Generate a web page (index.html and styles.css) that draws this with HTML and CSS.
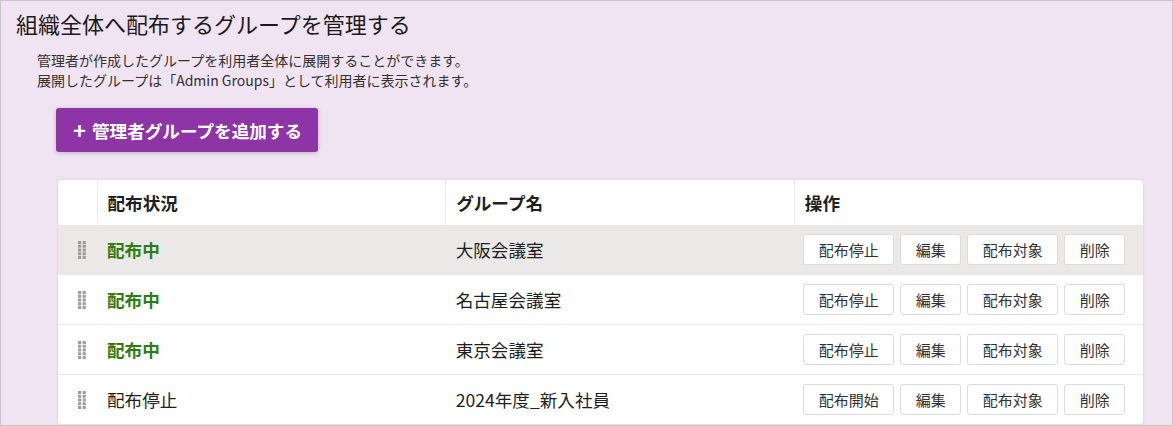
FILE: index.html
```html
<!DOCTYPE html>
<html lang="ja">
<head>
<meta charset="utf-8">
<title>管理者グループ</title>
<link rel="stylesheet" href="styles.css">
</head>
<body>
<div class="page">
  <h1 class="title">組織全体へ配布するグループを管理する</h1>
  <div class="desc">
    <p>管理者が作成したグループを利用者全体に展開することができます。</p>
    <p>展開したグループは「Admin Groups」として利用者に表示されます。</p>
  </div>
  <button class="add-btn"><span class="plus">+</span>管理者グループを追加する</button>
  <div class="card">
    <table class="grid">
      <colgroup>
        <col class="c-drag"><col class="c-col"><col class="c-col"><col class="c-col">
      </colgroup>
      <thead>
        <tr>
          <th class="drag-h"></th>
          <th>配布状況</th>
          <th>グループ名</th>
          <th class="last">操作</th>
        </tr>
      </thead>
      <tbody>
        <tr class="hover">
          <td class="drag"><svg class="handle" width="8" height="18" viewBox="0 0 8 18"><g fill="#9c9c9c"><rect x="0" y="0" width="3.2" height="3"/><rect x="4.6" y="0" width="3.2" height="3"/><rect x="0" y="3.75" width="3.2" height="3"/><rect x="4.6" y="3.75" width="3.2" height="3"/><rect x="0" y="7.5" width="3.2" height="3"/><rect x="4.6" y="7.5" width="3.2" height="3"/><rect x="0" y="11.25" width="3.2" height="3"/><rect x="4.6" y="11.25" width="3.2" height="3"/><rect x="0" y="15" width="3.2" height="3"/><rect x="4.6" y="15" width="3.2" height="3"/></g></svg></td>
          <td class="status on">配布中</td>
          <td>大阪会議室</td>
          <td class="ops"><div class="btns"><button class="b">配布停止</button><button class="b">編集</button><button class="b">配布対象</button><button class="b">削除</button></div></td>
        </tr>
        <tr>
          <td class="drag"><svg class="handle" width="8" height="18" viewBox="0 0 8 18"><g fill="#9c9c9c"><rect x="0" y="0" width="3.2" height="3"/><rect x="4.6" y="0" width="3.2" height="3"/><rect x="0" y="3.75" width="3.2" height="3"/><rect x="4.6" y="3.75" width="3.2" height="3"/><rect x="0" y="7.5" width="3.2" height="3"/><rect x="4.6" y="7.5" width="3.2" height="3"/><rect x="0" y="11.25" width="3.2" height="3"/><rect x="4.6" y="11.25" width="3.2" height="3"/><rect x="0" y="15" width="3.2" height="3"/><rect x="4.6" y="15" width="3.2" height="3"/></g></svg></td>
          <td class="status on">配布中</td>
          <td>名古屋会議室</td>
          <td class="ops"><div class="btns"><button class="b">配布停止</button><button class="b">編集</button><button class="b">配布対象</button><button class="b">削除</button></div></td>
        </tr>
        <tr>
          <td class="drag"><svg class="handle" width="8" height="18" viewBox="0 0 8 18"><g fill="#9c9c9c"><rect x="0" y="0" width="3.2" height="3"/><rect x="4.6" y="0" width="3.2" height="3"/><rect x="0" y="3.75" width="3.2" height="3"/><rect x="4.6" y="3.75" width="3.2" height="3"/><rect x="0" y="7.5" width="3.2" height="3"/><rect x="4.6" y="7.5" width="3.2" height="3"/><rect x="0" y="11.25" width="3.2" height="3"/><rect x="4.6" y="11.25" width="3.2" height="3"/><rect x="0" y="15" width="3.2" height="3"/><rect x="4.6" y="15" width="3.2" height="3"/></g></svg></td>
          <td class="status on">配布中</td>
          <td>東京会議室</td>
          <td class="ops"><div class="btns"><button class="b">配布停止</button><button class="b">編集</button><button class="b">配布対象</button><button class="b">削除</button></div></td>
        </tr>
        <tr>
          <td class="drag"><svg class="handle" width="8" height="18" viewBox="0 0 8 18"><g fill="#9c9c9c"><rect x="0" y="0" width="3.2" height="3"/><rect x="4.6" y="0" width="3.2" height="3"/><rect x="0" y="3.75" width="3.2" height="3"/><rect x="4.6" y="3.75" width="3.2" height="3"/><rect x="0" y="7.5" width="3.2" height="3"/><rect x="4.6" y="7.5" width="3.2" height="3"/><rect x="0" y="11.25" width="3.2" height="3"/><rect x="4.6" y="11.25" width="3.2" height="3"/><rect x="0" y="15" width="3.2" height="3"/><rect x="4.6" y="15" width="3.2" height="3"/></g></svg></td>
          <td class="status">配布停止</td>
          <td>2024年度_新入社員</td>
          <td class="ops"><div class="btns"><button class="b">配布開始</button><button class="b">編集</button><button class="b">配布対象</button><button class="b">削除</button></div></td>
        </tr>
      </tbody>
    </table>
  </div>
</div>
</body>
</html>
```

FILE: styles.css
```css
html, body {
  margin: 0;
  padding: 0;
  height: 100%;
}
body {
  box-sizing: border-box;
  border: 1px solid #c6c6c6;
  background: #f1e4f2;
  overflow: hidden;
  font-family: "Noto Sans CJK JP", "Noto Sans", sans-serif;
  color: #201f1e;
}
.page {
  padding: 7px 0 0 15px;
}
.title {
  margin: 0;
  font-size: 22px;
  font-weight: 400;
  line-height: 30px;
  color: #1b1a19;
}
.desc {
  margin: 12px 0 0 21px;
  font-size: 14px;
  line-height: 20px;
  color: #323130;
}
.desc p {
  margin: 0;
}
.add-btn {
  display: flex;
  align-items: center;
  margin: 18px 0 0 40px;
  height: 44px;
  padding: 0 16px 0 17px;
  border: none;
  border-radius: 3px;
  background: #8d35a7;
  color: #ffffff;
  font-family: inherit;
  font-size: 17.6px;
  font-weight: 700;
  box-shadow: 0 1px 4px rgba(0, 0, 0, 0.22);
}
.plus {
  font-size: 22px;
  font-weight: 700;
  line-height: 1;
  margin-right: 6px;
  position: relative;
  top: -1px;
}
.card {
  margin: 27px 0 0 41px;
  width: 1087px;
  background: #ffffff;
  border: 1px solid #e3dde4;
  border-radius: 4px;
  box-sizing: border-box;
  box-shadow: 0 0 2px rgba(0, 0, 0, 0.06);
  overflow: hidden;
}
.grid {
  width: 100%;
  border-collapse: collapse;
  table-layout: fixed;
}
.c-drag { width: 39px; }
th {
  height: 45px;
  padding: 0 10px;
  text-align: left;
  font-size: 17.6px;
  font-weight: 700;
  color: #201f1e;
  border-right: 1px solid #ebebeb;
}
th.last { border-right: none; }
td {
  height: 49px;
  padding: 0 10px;
  font-size: 17.6px;
  color: #201f1e;
  border-top: 1px solid #e8e8e8;
}
thead + tbody tr:first-child td { border-top: none; }
tr.hover td { background: #ebe9e7; }
td.drag {
  padding: 0 0 0 20px;
}
.handle { display: block; }
.status.on {
  color: #2d7d16;
  font-weight: 700;
}
td.ops { padding: 0 9px; }
.btns {
  display: flex;
  gap: 6px;
}
.b {
  height: 31px;
  padding: 0 14.5px;
  background: #ffffff;
  border: 1px solid #dcdcdc;
  border-radius: 3px;
  font-family: inherit;
  font-size: 15px;
  color: #323130;
}
```
